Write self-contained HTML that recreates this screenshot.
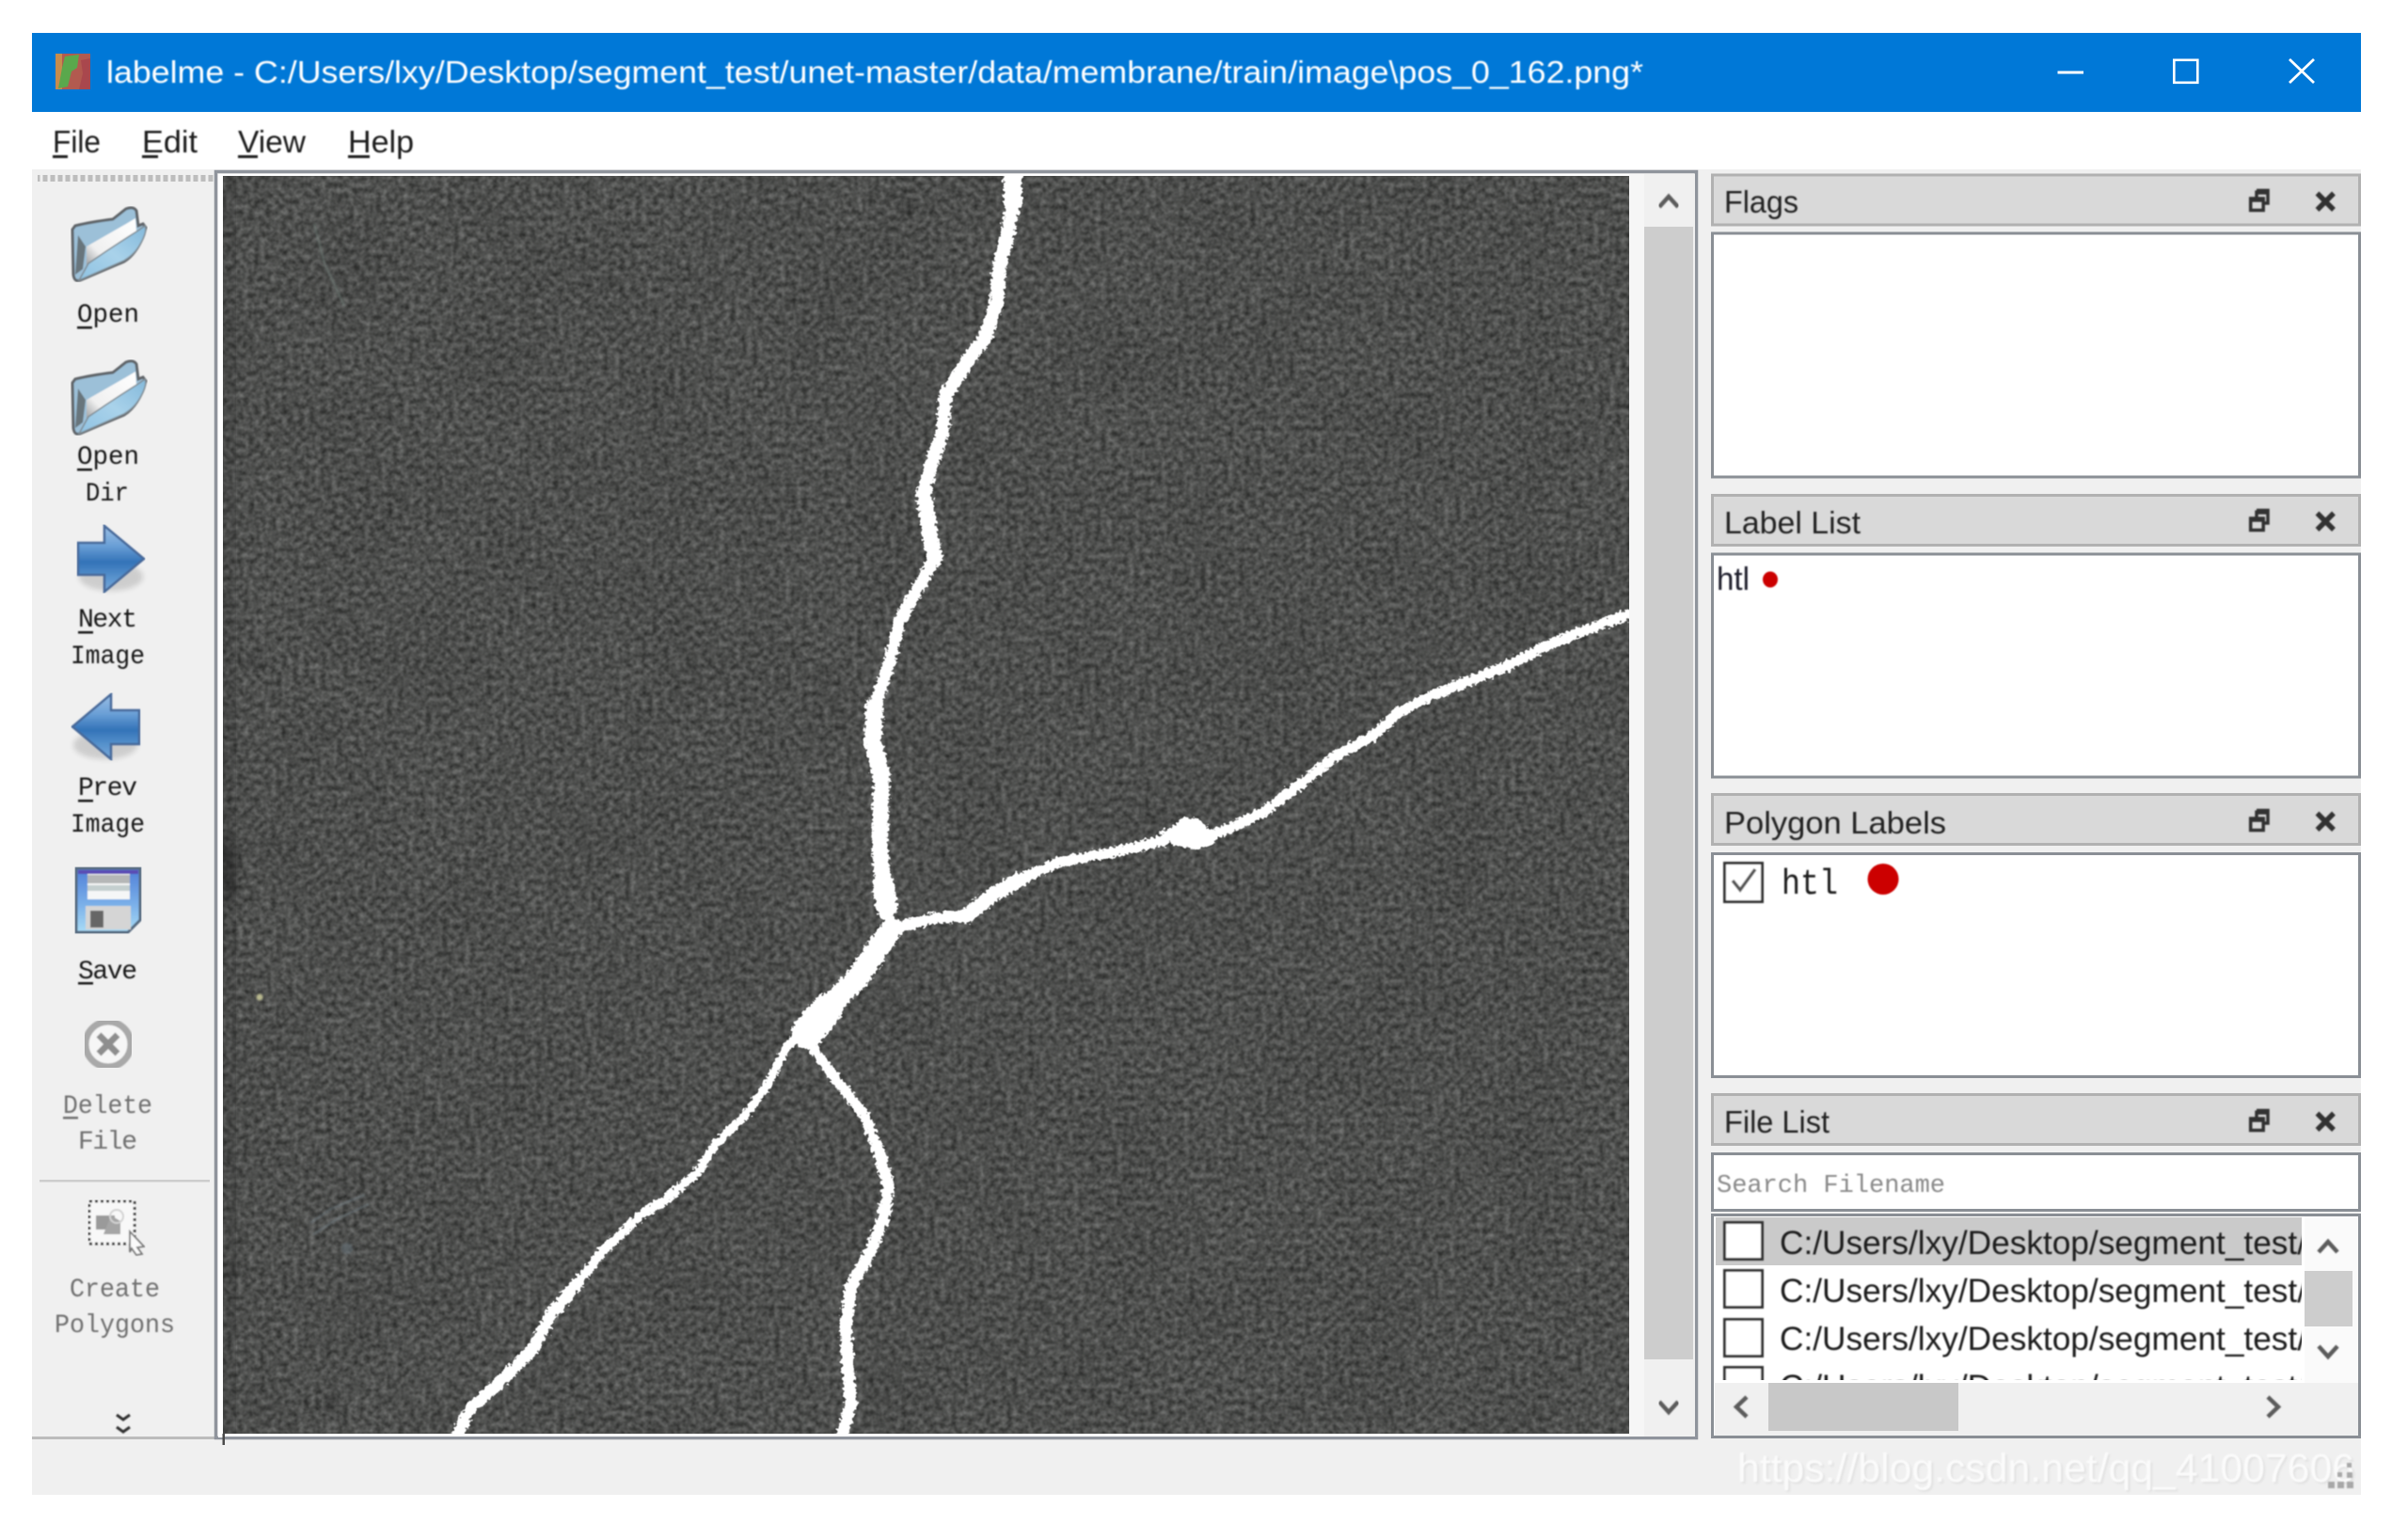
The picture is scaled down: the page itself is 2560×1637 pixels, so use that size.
<!DOCTYPE html>
<html lang="en">
<head>
<meta charset="utf-8">
<title>labelme</title>
<style>
html,body{margin:0;padding:0;background:#fff;width:2560px;height:1637px;overflow:hidden}
svg{display:block}
text{white-space:pre}
.s{font-family:"Liberation Sans",Arial,sans-serif}
.m{font-family:"Liberation Mono","DejaVu Sans Mono",monospace}
.tb{font-size:28px;fill:#151515;text-anchor:start}
.tg{fill:#6f6f6f}
.dock{font-size:33px;fill:#222}
.row{font-size:35px;fill:#1c1c1c}
</style>
</head>
<body>
<svg xmlns="http://www.w3.org/2000/svg" width="2560" height="1637" viewBox="0 0 2560 1637">
<defs>
<filter id="soft" x="-2%" y="-2%" width="104%" height="104%"><feGaussianBlur stdDeviation="0.7"/></filter>
<filter id="soft2" x="-10%" y="-10%" width="120%" height="120%"><feGaussianBlur stdDeviation="1"/></filter>
<filter id="blot" x="-60%" y="-60%" width="220%" height="220%"><feGaussianBlur stdDeviation="5"/></filter>
<filter id="shad" x="-30%" y="-30%" width="160%" height="160%"><feGaussianBlur stdDeviation="3"/></filter>
<filter id="wm" x="-5%" y="-30%" width="110%" height="160%"><feGaussianBlur stdDeviation="1.1"/></filter>
<filter id="tex" x="0" y="0" width="100%" height="100%" color-interpolation-filters="sRGB">
<feTurbulence type="fractalNoise" baseFrequency=".17" numOctaves="3" seed="11"/>
<feColorMatrix type="matrix" values=".38 0 0 0 .122 .38 0 0 0 .126 .38 0 0 0 .120 0 0 0 0 1"/>
<feGaussianBlur stdDeviation=".8"/>
</filter>
<filter id="tex2" x="0" y="0" width="100%" height="100%" color-interpolation-filters="sRGB">
<feTurbulence type="fractalNoise" baseFrequency=".012" numOctaves="3" seed="4"/>
<feColorMatrix type="matrix" values="0 0 0 0 0 0 0 0 0 0 0 0 0 0 0 1.1 0 0 0 -.42"/>
</filter>
<filter id="rough" x="-5%" y="-5%" width="110%" height="110%">
<feTurbulence type="fractalNoise" baseFrequency=".28" numOctaves="2" seed="3" result="n"/>
<feDisplacementMap in="SourceGraphic" in2="n" scale="9" xChannelSelector="R" yChannelSelector="G"/>
<feGaussianBlur stdDeviation=".5"/>
</filter>
<clipPath id="img"><rect x="237" y="187" width="1495" height="1337"/></clipPath>
<clipPath id="lst"><rect x="1824" y="1294" width="623" height="173"/></clipPath>
<linearGradient id="arrow" x1="0" y1="0" x2="0" y2="1">
<stop offset="0" stop-color="#9cc0e6"/><stop offset=".3" stop-color="#6a9fd6"/><stop offset=".55" stop-color="#3373b8"/><stop offset=".8" stop-color="#5a94ce"/><stop offset="1" stop-color="#7aa8d8"/>
</linearGradient>
<linearGradient id="disk" x1="0" y1="0" x2="0" y2="1">
<stop offset="0" stop-color="#4f7fd8"/><stop offset=".55" stop-color="#79aee8"/><stop offset="1" stop-color="#a9dcf6"/>
</linearGradient>
<linearGradient id="flapF" x1="0" y1="1" x2="1" y2="0">
<stop offset="0" stop-color="#8fc2e2"/><stop offset=".5" stop-color="#a9d2ea"/><stop offset="1" stop-color="#84b9db"/>
</linearGradient>
<linearGradient id="sheet" x1="0" y1="1" x2="1" y2="0">
<stop offset="0" stop-color="#8c8f92"/><stop offset=".3" stop-color="#f0f0f0"/><stop offset="1" stop-color="#fff"/>
</linearGradient>
<g id="folder">
<path d="M77 244 L78 292 Q79 300 85 298 L132 278 Q148 268 155 242 L152 238 L147 240 L145 224 Q142 219 134 222 L120 233 Q96 236 80 240 Z" fill="#9cc0d8" stroke="#5f6468" stroke-width="3"/>
<path d="M83 250 L80 292 L88 286 L91 262 Z" fill="#5f666b" opacity=".85"/>
<path d="M92 262 L134 238 L144 232 L145 246 L92 288 Z" fill="url(#sheet)"/>
<path d="M84 298 L94 280 Q120 262 147 245 L154 240 Q157 245 150 258 Q144 270 132 277 Z" fill="url(#flapF)" stroke="#7f8a92" stroke-width="1.5"/>
</g>
<g id="float">
<path d="M2399 202.500 H2411 V216 H2406" fill="none" stroke="#333" stroke-width="3.500"/>
<path d="M2399 202.500 V210" fill="none" stroke="#333" stroke-width="3.500"/>
<path d="M2399 205 H2411" fill="none" stroke="#333" stroke-width="3.500"/>
<rect x="2392.700" y="211" width="13.500" height="12.500" fill="none" stroke="#333" stroke-width="3.500"/>
<path d="M2392 213 H2406" fill="none" stroke="#333" stroke-width="3.500"/>
<path d="M2463.500 205.500 L2481 223 M2481 205.500 L2463.500 223" fill="none" stroke="#333" stroke-width="5.500"/>
</g>
<path id="upa" d="M-10 7 L0 -4 L10 7" fill="none" stroke="#5c5c5c" stroke-width="4.500"/>
</defs>

<rect width="2560" height="1637" fill="#fff"/>

<!-- window body -->
<rect x="34" y="180" width="2476" height="1409" fill="#f0f0f0"/>
<rect x="34" y="119" width="2476" height="61" fill="#fff"/>
<rect x="34" y="35" width="2476" height="84" fill="#0078d7"/>

<!-- title bar -->
<g>
<rect x="59" y="57" width="37" height="38" fill="#b25a4f"/>
<path d="M59 57 H66 V95 H59Z" fill="#c78c4d"/>
<path d="M69 60 L84 58 L82 72 L76 76 L72 92 L62 94 L66 72 Z" fill="#5aa84c"/>
<path d="M86 64 L96 62 V95 H84 L88 78Z" fill="#a9474d"/>
<text class="s" x="113" y="88" font-size="33" fill="#fff" textLength="1634" lengthAdjust="spacingAndGlyphs" filter="url(#soft)">labelme - C:/Users/lxy/Desktop/segment_test/unet-master/data/membrane/train/image\pos_0_162.png*</text>
<rect x="2187.500" y="75.500" width="27.500" height="3" fill="#fff"/>
<rect x="2311.300" y="63.800" width="25" height="24" fill="none" stroke="#fff" stroke-width="2.600"/>
<path d="M2434 63 L2460 88 M2460 63 L2434 88" stroke="#fff" stroke-width="2.800" fill="none"/>
</g>

<!-- menu -->
<g class="s" font-size="33" fill="#1a1a1a" filter="url(#soft)">
<text x="56" y="162" textLength="51" lengthAdjust="spacingAndGlyphs">File</text>
<text x="151" y="162" textLength="59" lengthAdjust="spacingAndGlyphs">Edit</text>
<text x="253" y="162" textLength="72" lengthAdjust="spacingAndGlyphs">View</text>
<text x="370" y="162" textLength="70" lengthAdjust="spacingAndGlyphs">Help</text>
<rect x="56" y="165" width="16" height="3"/>
<rect x="151" y="165" width="17" height="3"/>
<rect x="253" y="165" width="21" height="3"/>
<rect x="370" y="165" width="23" height="3"/>
</g>

<!-- toolbar -->
<g>
<rect x="40" y="186" width="190" height="7" fill="#bdbdbd"/>
<path d="M44 186 V193 M52 186 V193 M60 186 V193 M68 186 V193 M76 186 V193 M84 186 V193 M92 186 V193 M100 186 V193 M108 186 V193 M116 186 V193 M124 186 V193 M132 186 V193 M140 186 V193 M148 186 V193 M156 186 V193 M164 186 V193 M172 186 V193 M180 186 V193 M188 186 V193 M196 186 V193 M204 186 V193 M212 186 V193 M220 186 V193 M228 186 V193" stroke="#f0f0f0" stroke-width="3"/>

<g filter="url(#soft)"><use href="#folder"/></g>
<g filter="url(#soft)"><use href="#folder" y="163"/></g>

<ellipse cx="118" cy="613" rx="34" ry="15" fill="#000" opacity=".14" filter="url(#shad)"/>
<path d="M83 577 H111 V559 L153 594 L111 629 V611 H83 Z" fill="url(#arrow)" stroke="#47699a" stroke-width="2.500" filter="url(#soft)"/>
<ellipse cx="112" cy="792" rx="34" ry="15" fill="#000" opacity=".14" filter="url(#shad)"/>
<path d="M148 755 H118 V738 L77 772.500 L118 807 V791 H148 Z" fill="url(#arrow)" stroke="#47699a" stroke-width="2.500" filter="url(#soft)"/>

<g filter="url(#soft)">
<path d="M81 923 H149 V978 L136 991 H81 Z" fill="url(#disk)" stroke="#566b80" stroke-width="3"/>
<rect x="83" y="925" width="64" height="4" fill="#5a4cb4"/>
<rect x="93" y="929" width="45" height="27" fill="#f5f7f7"/>
<rect x="93" y="930" width="45" height="9" fill="#b5b7b7"/>
<rect x="93" y="941" width="45" height="6" fill="#c4cfcf"/>
<rect x="91" y="963" width="48" height="25" fill="#d5d5d5"/>
<rect x="96" y="968" width="14" height="18" fill="#666"/>
</g>

<g filter="url(#soft)">
<circle cx="115" cy="1110" r="24" fill="#f6f6f6" stroke="#a9a9a9" stroke-width="7"/>
<path d="M105 1100 L125 1120 M125 1100 L105 1120" stroke="#8e8e8e" stroke-width="7"/>
</g>

<rect x="42" y="1254" width="181" height="2.500" fill="#cdcdcd"/>

<g filter="url(#soft)">
<rect x="95" y="1277" width="48" height="45" fill="#f8f8f8" stroke="#444" stroke-width="3" stroke-dasharray="3 3"/>
<rect x="102" y="1292" width="20" height="15" fill="#9a9a9a"/>
<path d="M110 1312 L128 1312 L128 1298 L118 1292 Z" fill="#a5a5a5"/>
<circle cx="124" cy="1293" r="7" fill="none" stroke="#d2d2d2" stroke-width="2"/>
<path d="M138 1309 L153 1325 L146 1326 L151 1333 L145 1334 L140 1327 L138 1331 Z" fill="#fafafa" stroke="#777" stroke-width="1.800"/>
</g>

<g filter="url(#soft)">
<g class="m tb">
<text x="82" y="342" textLength="66" lengthAdjust="spacingAndGlyphs">Open</text>
<text x="82" y="493" textLength="66" lengthAdjust="spacingAndGlyphs">Open</text>
<text x="91" y="532" textLength="46" lengthAdjust="spacingAndGlyphs">Dir</text>
<text x="83" y="666" textLength="63" lengthAdjust="spacing">Next</text>
<text x="75" y="705" textLength="79" lengthAdjust="spacingAndGlyphs">Image</text>
<text x="83" y="845" textLength="63" lengthAdjust="spacing">Prev</text>
<text x="75" y="884" textLength="79" lengthAdjust="spacingAndGlyphs">Image</text>
<text x="83" y="1040" textLength="63" lengthAdjust="spacing">Save</text>
</g>
<rect x="82" y="347" width="16" height="2.500" fill="#151515"/>
<rect x="82" y="498" width="16" height="2.500" fill="#151515"/>
<rect x="83" y="671" width="16" height="2.500" fill="#151515"/>
<rect x="83" y="850" width="16" height="2.500" fill="#151515"/>
<rect x="83" y="1044" width="16" height="2.500" fill="#151515"/>
<g class="m tb tg" style="fill:#6f6f6f">
<text x="67" y="1183" textLength="95" lengthAdjust="spacingAndGlyphs">Delete</text>
<text x="83" y="1221" textLength="63" lengthAdjust="spacing">File</text>
<text x="74" y="1378" textLength="96" lengthAdjust="spacingAndGlyphs">Create</text>
<text x="58" y="1416" textLength="128" lengthAdjust="spacingAndGlyphs">Polygons</text>
</g>
<rect x="67" y="1187" width="16" height="2.500" fill="#6f6f6f"/>
<path d="M124 1504 L131 1509 L138 1504 M124 1517 L131 1522 L138 1517" fill="none" stroke="#333" stroke-width="3"/>
</g>
</g>

<!-- toolbar / status separators -->
<rect x="34" y="1527" width="198" height="3" fill="#bcbcbc"/>

<!-- canvas frame -->
<rect x="229.500" y="182.500" width="1574" height="1346" fill="#f2f2f2" stroke="#8f949c" stroke-width="3.500"/>
<rect x="232" y="185" width="1500" height="340" fill="#fff"/>
<rect x="232" y="185" width="6" height="1343" fill="#fff"/>
<rect x="232" y="1524" width="1500" height="3" fill="#fff"/>
<rect x="236.500" y="1524" width="2.500" height="12" fill="#4a4a4a"/>

<!-- crack image -->
<g clip-path="url(#img)">
<rect x="237" y="187" width="1495" height="1337" fill="#4b4c4b"/>
<rect x="237" y="187" width="1495" height="1337" filter="url(#tex)"/>
<rect x="237" y="187" width="1495" height="1337" filter="url(#tex2)" opacity=".12"/>
<!-- dark blemishes -->
<g fill="#1c1c1c" opacity=".6" filter="url(#blot)">
<ellipse cx="243" cy="925" rx="7" ry="38"/>
<ellipse cx="271" cy="706" rx="12" ry="7" opacity=".5"/>
<ellipse cx="248" cy="1350" rx="8" ry="4"/>
<ellipse cx="352" cy="1492" rx="6" ry="8"/>
<ellipse cx="966" cy="218" rx="7" ry="7" opacity=".5"/>
</g>
<rect x="237" y="187" width="14" height="1337" fill="#222" opacity=".14"/>
<!-- light specks -->
<g filter="url(#soft2)" fill="none">
<path d="M334 238 L345 280 L366 325" stroke="#8f9f9c" stroke-width="2.500" opacity=".4"/>
<path d="M330 1300 L352 1285 L388 1270 M333 1312 L360 1295 L392 1280" stroke="#7f8f98" stroke-width="2.500" opacity=".4"/>
<circle cx="369" cy="1327" r="6" fill="#6b7a84" opacity=".4"/>
<circle cx="276" cy="1060" r="3.500" fill="#b9b98f"/>
</g>
<!-- cracks -->
<g filter="url(#rough)" fill="none" stroke="#fff" stroke-linecap="round" stroke-linejoin="round">
<path stroke-width="20" d="M1077 180 L1077 215"/>
<path stroke-width="15" d="M1077 215 L1071 250 L1062 286 L1059.500 322 L1048 357.500 L1025 389 L1005 420"/>
<path stroke-width="14" d="M1005 420 L1002 460 L991 491 L982 523"/>
<path stroke-width="17" d="M982 523 L988 563 L993.500 594"/>
<path stroke-width="13" d="M993.500 594 L976 625 L956 661 L945 706 L930 750"/>
<path stroke-width="19" d="M930 750 L927.500 786 L937 826"/>
<path stroke-width="17" d="M937 826 L936 870 L935 895 L939 939"/>
<path stroke-width="23" d="M939 939 L943 965"/>
<path stroke-width="11" d="M943 965 L947.600 988"/>
<path stroke-width="24" d="M947.600 988 L913 1037.500 L879 1073"/>
<path stroke-width="34" d="M879 1073 L858 1098"/>
<path stroke-width="9" d="M850 1100 L836 1113 L816 1153.500 L792.500 1185 L761 1216 L741 1247"/>
<path stroke-width="10" d="M741 1247 L706.500 1276 L683.500 1290 L640.500 1330 L615 1363"/>
<path stroke-width="13" d="M615 1363 L586 1397 L566 1435 L523 1477"/>
<path stroke-width="12" d="M523 1477 L500 1497 L484 1530"/>
<path stroke-width="11" d="M858 1105 L890 1149 L919 1185 L933 1220.500"/>
<path stroke-width="13" d="M933 1220.500 L945 1261 L939 1296 L924.600 1332 L904.500 1368"/>
<path stroke-width="13" d="M904.500 1368 L899 1408 L901.600 1453 L904.500 1493 L894 1530"/>
<path stroke-width="12" d="M947.600 988 L988 977 L1028 973"/>
<path stroke-width="16" d="M1028 973 L1057 950 L1085 935"/>
<path stroke-width="11" d="M1085 935 L1100 928 L1124 917 L1196 903 L1239 893"/>
<path fill="#fff" stroke-width="3" d="M1234 885 L1248 880 L1258 870 L1274 872 L1284 882 L1296 884 L1290 896 L1272 902 L1256 898 L1240 894 Z"/>
<path stroke-width="11" d="M1288 888 L1301 883 L1344 863 L1387 830 L1420.600 803 L1459 783 L1487.600 757 L1516 742 L1559 725 L1602 708 L1641 688 L1679 672 L1740 650"/>
</g>
</g>

<!-- canvas scrollbars -->
<rect x="1732" y="185" width="16" height="1342" fill="#f6f6f6"/>
<rect x="1748" y="185" width="54" height="1342" fill="#f0f0f0"/>
<rect x="1748" y="241" width="52" height="1204" fill="#cdcdcd"/>
<g filter="url(#soft)">
<use href="#upa" x="1774" y="213"/>
<use href="#upa" transform="translate(1774 1497) scale(1 -1)"/>
</g>

<!-- docks -->
<g id="docks">
<rect x="1820.500" y="186" width="688" height="53" fill="#d9d9d9" stroke="#b1b1b1" stroke-width="3"/>
<rect x="1820.500" y="248" width="688" height="259" fill="#fff" stroke="#8a8f95" stroke-width="3"/>
<rect x="1820.500" y="526.500" width="688" height="53" fill="#d9d9d9" stroke="#b1b1b1" stroke-width="3"/>
<rect x="1820.500" y="589" width="688" height="237" fill="#fff" stroke="#8a8f95" stroke-width="3"/>
<rect x="1820.500" y="844.500" width="688" height="53" fill="#d9d9d9" stroke="#b1b1b1" stroke-width="3"/>
<rect x="1820.500" y="907.500" width="688" height="237" fill="#fff" stroke="#8a8f95" stroke-width="3"/>
<rect x="1820.500" y="1163.500" width="688" height="53" fill="#d9d9d9" stroke="#b1b1b1" stroke-width="3"/>
<rect x="1820.500" y="1226.500" width="688" height="60" fill="#fff" stroke="#8a8f95" stroke-width="3"/>
<rect x="1820.500" y="1291.500" width="688" height="236" fill="#fff" stroke="#8a8f95" stroke-width="3"/>

<g filter="url(#soft)">
<g class="s dock">
<text x="1833" y="226" textLength="79" lengthAdjust="spacingAndGlyphs">Flags</text>
<text x="1833" y="567" textLength="145" lengthAdjust="spacingAndGlyphs">Label List</text>
<text x="1833" y="886" textLength="236" lengthAdjust="spacingAndGlyphs">Polygon Labels</text>
<text x="1833" y="1204" textLength="112" lengthAdjust="spacingAndGlyphs">File List</text>
</g>
<use href="#float"/>
<use href="#float" y="340"/>
<use href="#float" y="659"/>
<use href="#float" y="978"/>

<text class="s" x="1825" y="627" font-size="34" fill="#1a1a2a" textLength="35" lengthAdjust="spacingAndGlyphs">htl</text>
<ellipse cx="1882" cy="616" rx="8" ry="8.500" fill="#cc0000"/>

<rect x="1833.500" y="917.500" width="40" height="41" fill="#fff" stroke="#333" stroke-width="3"/>
<path d="M1842 936 L1850 946 L1866 924" fill="none" stroke="#555" stroke-width="3.500"/>
<text class="m" x="1894" y="950" font-size="38" fill="#1a1a1a" textLength="60" lengthAdjust="spacingAndGlyphs">htl</text>
<ellipse cx="2002" cy="934.500" rx="16.500" ry="16.500" fill="#cc0000"/>

<text class="m" x="1825" y="1267" font-size="27" fill="#8a8a8a" textLength="243" lengthAdjust="spacing">Search Filename</text>
</g>

<!-- file list rows -->
<rect x="1824" y="1294" width="623" height="51" fill="#cacaca"/>
<g clip-path="url(#lst)" filter="url(#soft)">
<rect x="1833.500" y="1299.500" width="40" height="39" fill="#fff" stroke="#333" stroke-width="3"/>
<rect x="1833.500" y="1350.500" width="40" height="39" fill="#fff" stroke="#333" stroke-width="3"/>
<rect x="1833.500" y="1402.500" width="40" height="39" fill="#fff" stroke="#333" stroke-width="3"/>
<rect x="1833.500" y="1453.500" width="40" height="39" fill="#fff" stroke="#333" stroke-width="3"/>
<g class="s row">
<text x="1892" y="1333" textLength="560" lengthAdjust="spacingAndGlyphs">C:/Users/lxy/Desktop/segment_test/</text>
<text x="1892" y="1384" textLength="560" lengthAdjust="spacingAndGlyphs">C:/Users/lxy/Desktop/segment_test/</text>
<text x="1892" y="1435" textLength="560" lengthAdjust="spacingAndGlyphs">C:/Users/lxy/Desktop/segment_test/</text>
<text x="1892" y="1486" textLength="560" lengthAdjust="spacingAndGlyphs">C:/Users/lxy/Desktop/segment_test/</text>
</g>
</g>

<!-- file list scrollbars -->
<rect x="2450" y="1293" width="57" height="178" fill="#fafafa"/>
<rect x="2450" y="1351" width="51" height="59" fill="#cdcdcd"/>
<rect x="1823" y="1470" width="684" height="56" fill="#f0f0f0"/>
<rect x="1880" y="1470" width="202" height="51" fill="#c8c8c8"/>
<g filter="url(#soft)">
<use href="#upa" x="2475" y="1324"/>
<use href="#upa" transform="translate(2475 1438) scale(1 -1)"/>
<path d="M1857 1485 L1846 1495.500 L1857 1506" fill="none" stroke="#5c5c5c" stroke-width="4.500"/>
<path d="M2411 1485 L2422 1495.500 L2411 1506" fill="none" stroke="#5c5c5c" stroke-width="4.500"/>
</g>
</g>

<!-- watermark and size grip -->
<text class="s" x="1849" y="1577" font-size="43" fill="#d4d4d4" opacity=".5" textLength="656" lengthAdjust="spacingAndGlyphs" filter="url(#wm)">https://blog.csdn.net/qq_41007606</text>
<text class="s" x="1847" y="1575" font-size="43" fill="#fbfbfb" textLength="656" lengthAdjust="spacingAndGlyphs" filter="url(#soft)">https://blog.csdn.net/qq_41007606</text>
<g fill="#a8a8a8" filter="url(#soft)">
<rect x="2475" y="1575" width="7" height="7"/><rect x="2485" y="1575" width="7" height="7"/><rect x="2495" y="1575" width="7" height="7"/>
<rect x="2485" y="1565" width="5" height="5"/><rect x="2495" y="1565" width="6" height="6"/>
<rect x="2495" y="1555" width="5" height="5"/>
</g>
</svg>
</body>
</html>
